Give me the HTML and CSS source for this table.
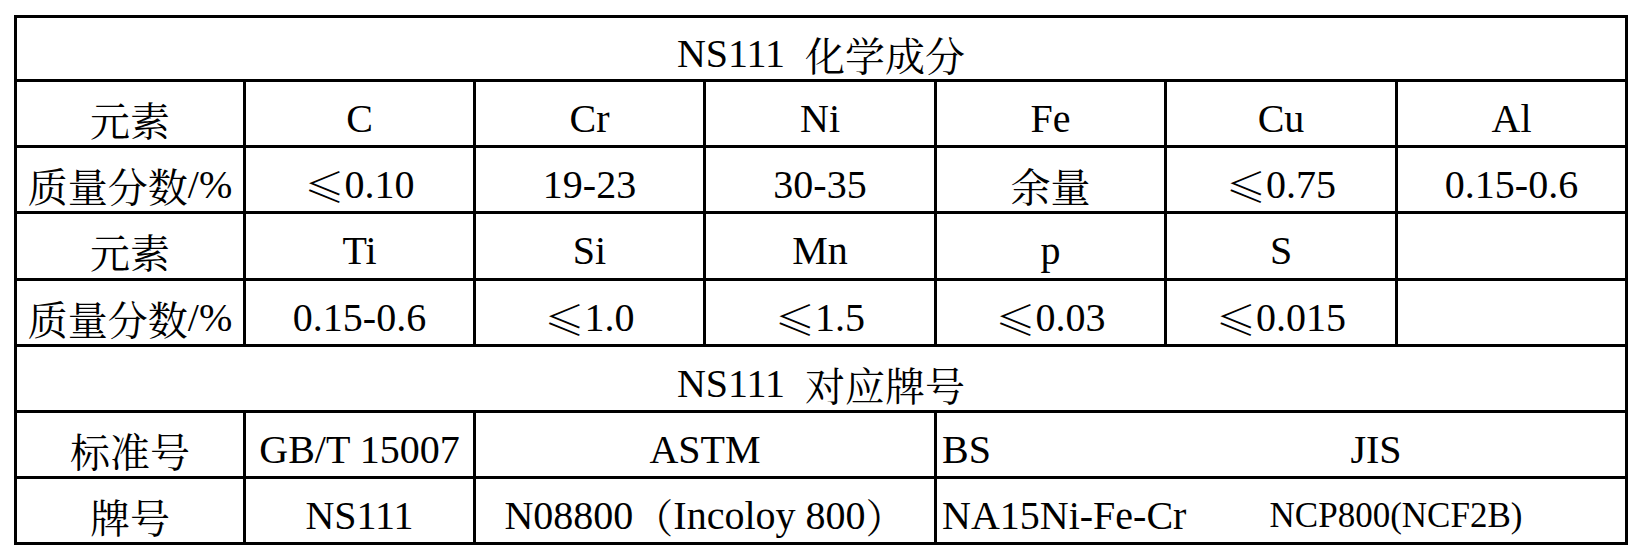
FILE: index.html
```html
<!DOCTYPE html>
<html>
<head>
<meta charset="utf-8">
<title>NS111 化学成分</title>
<link rel="stylesheet" href="styles.css">
</head>
<body>
<div class="sheet">
  <div class="cell span7"><span class="lat">NS111&nbsp;&nbsp;</span><span class="cjk">化学成分</span></div>

  <div class="cell"><span class="cjk">元素</span></div>
  <div class="cell"><span class="lat">C</span></div>
  <div class="cell"><span class="lat">Cr</span></div>
  <div class="cell"><span class="lat">Ni</span></div>
  <div class="cell"><span class="lat">Fe</span></div>
  <div class="cell"><span class="lat">Cu</span></div>
  <div class="cell"><span class="lat">Al</span></div>

  <div class="cell"><span class="cjk">质量分数</span><span class="lat">/%</span></div>
  <div class="cell"><span class="le">≤</span><span class="lat">0.10</span></div>
  <div class="cell"><span class="lat">19-23</span></div>
  <div class="cell"><span class="lat">30-35</span></div>
  <div class="cell"><span class="cjk">余量</span></div>
  <div class="cell"><span class="le">≤</span><span class="lat">0.75</span></div>
  <div class="cell"><span class="lat">0.15-0.6</span></div>

  <div class="cell"><span class="cjk">元素</span></div>
  <div class="cell"><span class="lat">Ti</span></div>
  <div class="cell"><span class="lat">Si</span></div>
  <div class="cell"><span class="lat">Mn</span></div>
  <div class="cell"><span class="lat">p</span></div>
  <div class="cell"><span class="lat">S</span></div>
  <div class="cell"></div>

  <div class="cell"><span class="cjk">质量分数</span><span class="lat">/%</span></div>
  <div class="cell"><span class="lat">0.15-0.6</span></div>
  <div class="cell"><span class="le">≤</span><span class="lat">1.0</span></div>
  <div class="cell"><span class="le">≤</span><span class="lat">1.5</span></div>
  <div class="cell"><span class="le">≤</span><span class="lat">0.03</span></div>
  <div class="cell"><span class="le">≤</span><span class="lat">0.015</span></div>
  <div class="cell"></div>

  <div class="cell span7"><span class="lat">NS111&nbsp;&nbsp;</span><span class="cjk">对应牌号</span></div>

  <div class="cell"><span class="cjk">标准号</span></div>
  <div class="cell"><span class="lat">GB/T 15007</span></div>
  <div class="cell span2"><span class="lat">ASTM</span></div>
  <div class="cell span3 split">
    <span class="lat sub-left">BS</span>
    <span class="lat sub-right jis">JIS</span>
  </div>

  <div class="cell"><span class="cjk">牌号</span></div>
  <div class="cell"><span class="lat">NS111</span></div>
  <div class="cell span2"><span class="lat">N08800</span><span class="cjk">（</span><span class="lat">Incoloy 800</span><span class="cjk">）</span></div>
  <div class="cell span3 split">
    <span class="lat sub-left">NA15Ni-Fe-Cr</span>
    <span class="lat sub-right narrow">NCP800(NCF2B)</span>
  </div>
</div>
</body>
</html>
```

FILE: styles.css
```css
html, body {
  margin: 0;
  padding: 0;
  background: #ffffff;
}

body {
  padding: 15px 0 0 14px;
}

.sheet {
  display: grid;
  grid-template-columns: 226px 227px 227px 228px 227px 228px 227px;
  grid-template-rows: 61px 63px 63px 64px 63px 63px 63px 63px;
  gap: 3px;
  padding: 3px;
  background: #000000;
  width: max-content;
  font-family: "Liberation Serif", "Noto Serif CJK SC", serif;
  font-size: 40px;
  line-height: 1.2;
  color: #000000;
}

.cell {
  background: #ffffff;
  display: flex;
  align-items: center;
  justify-content: center;
  padding-top: 10px;
  white-space: nowrap;
}

.lat {
  font-family: "Liberation Serif", "Times New Roman", serif;
}

.cjk {
  font-family: "Noto Serif CJK SC", "Noto Sans CJK SC", serif;
}

.le {
  font-family: "Noto Serif CJK SC", "Noto Sans CJK SC", serif;
}

.span7 { grid-column: span 7; }
.span2 { grid-column: span 2; }
.span3 { grid-column: span 3; }

.split {
  display: grid;
  grid-template-columns: 230px 1fr;
  align-items: center;
}

.sub-left {
  padding-left: 5px;
  text-align: left;
}

.sub-right {
  text-align: center;
}

.jis {
  padding-right: 40px;
}

.narrow {
  font-size: 35px;
}
```
